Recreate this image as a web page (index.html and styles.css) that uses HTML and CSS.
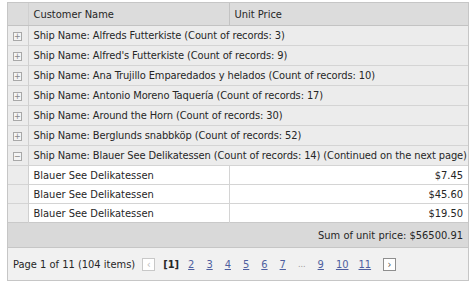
FILE: index.html
```html
<!DOCTYPE html>
<html lang="en">

<head>
    <meta charset="UTF-8">
    <title>Grid</title>
    <link rel="stylesheet" href="styles.css">
</head>

<body>
    <div class="grid">
        <table class="grid-table">
            <colgroup>
                <col class="indent-col">
                <col class="name-col">
                <col>
            </colgroup>
            <tr class="header-row">
                <td class="indent"></td>
                <td class="col-name">Customer Name</td>
                <td class="col-price">Unit Price</td>
            </tr>
            <tr class="group-row">
                <td class="indent"><span class="expand">+</span></td>
                <td colspan="2">Ship Name: Alfreds Futterkiste (Count of records: 3)</td>
            </tr>
            <tr class="group-row">
                <td class="indent"><span class="expand">+</span></td>
                <td colspan="2">Ship Name: Alfred's Futterkiste (Count of records: 9)</td>
            </tr>
            <tr class="group-row">
                <td class="indent"><span class="expand">+</span></td>
                <td colspan="2">Ship Name: Ana Trujillo Emparedados y helados (Count of records: 10)</td>
            </tr>
            <tr class="group-row">
                <td class="indent"><span class="expand">+</span></td>
                <td colspan="2">Ship Name: Antonio Moreno Taquería (Count of records: 17)</td>
            </tr>
            <tr class="group-row">
                <td class="indent"><span class="expand">+</span></td>
                <td colspan="2">Ship Name: Around the Horn (Count of records: 30)</td>
            </tr>
            <tr class="group-row">
                <td class="indent"><span class="expand">+</span></td>
                <td colspan="2">Ship Name: Berglunds snabbköp (Count of records: 52)</td>
            </tr>
            <tr class="group-row">
                <td class="indent"><span class="expand">&minus;</span></td>
                <td colspan="2">Ship Name: Blauer See Delikatessen (Count of records: 14) (Continued on the next page)</td>
            </tr>
            <tr class="data-row">
                <td class="indent"></td>
                <td>Blauer See Delikatessen</td>
                <td class="price">$7.45</td>
            </tr>
            <tr class="data-row">
                <td class="indent"></td>
                <td>Blauer See Delikatessen</td>
                <td class="price">$45.60</td>
            </tr>
            <tr class="data-row">
                <td class="indent"></td>
                <td>Blauer See Delikatessen</td>
                <td class="price">$19.50</td>
            </tr>
            <tr class="footer-row">
                <td colspan="3">Sum of unit price: $56500.91</td>
            </tr>
        </table>
        <div class="pager">
            <span class="summary">Page 1 of 11 (104 items)</span>
            <span class="nav-btn prev disabled">&lsaquo;</span>
            <b class="current">[1]</b>
            <a href="#">2</a>
            <a href="#">3</a>
            <a href="#">4</a>
            <a href="#">5</a>
            <a href="#">6</a>
            <a href="#">7</a>
            <span class="dots">...</span>
            <a href="#">9</a>
            <a href="#">10</a>
            <a href="#" class="last">11</a>
            <span class="nav-btn">&rsaquo;</span>
        </div>
    </div>
</body>

</html>
```

FILE: styles.css
```css
body {
    margin: 2px 0 0 7px;
    font-family: "DejaVu Sans Condensed", "DejaVu Sans", sans-serif;
    font-size: 11px;
    color: #262626;
    background-color: white;
}

.grid {
    width: 460px;
    border: 1px solid #c6c6c6;
}

.grid-table {
    width: 100%;
    border-collapse: collapse;
    table-layout: fixed;
}

.indent-col {
    width: 20px;
}

.name-col {
    width: 201px;
}

.grid-table td {
    padding: 0 5px;
    height: 19px;
    border-top: 1px solid #d4d4d4;
    white-space: nowrap;
    overflow: hidden;
}

.header-row td {
    background-color: #dcdcdc;
    height: 22px;
    border-top: none;
    border-bottom: 1px solid #c3c3c3;
}

.header-row .col-name {
    border-right: 1px solid #c3c3c3;
}

.group-row td:nth-child(2) {
    letter-spacing: -0.1px;
}

.indent {
    background-color: #e4e4e4;
    border-right: 1px solid #d0d0d0;
}

.header-row .indent {
    background-color: #dcdcdc;
}

.group-row td {
    background-color: #ececec;
}

.data-row td {
    background-color: white;
    height: 18px;
}

.data-row td:nth-child(2) {
    border-right: 1px solid #d4d4d4;
}

.data-row .indent {
    background-color: #ececec;
}

.price {
    text-align: right;
}

.expand {
    display: inline-flex;
    width: 7px;
    height: 7px;
    border: 1px solid #a8a8a8;
    font-size: 9px;
    line-height: 7px;
    justify-content: center;
    color: #888;
    background-color: #f4f4f4;
}

.footer-row td {
    background-color: #d9d9d9;
    text-align: right;
    height: 24px;
    border-top: 1px solid #c9c9c9;
}

.pager {
    display: flex;
    align-items: center;
    gap: 12px;
    height: 32px;
    padding-left: 5px;
    background-color: #f1f1f1;
    border-top: 1px solid #c6c6c6;
}

.pager a {
    color: #4e5fa0;
}

.pager a.last {
    margin-left: -2px;
}

.current {
    font-weight: bold;
    margin-right: -3px;
}

.dots {
    color: #999;
    font-size: 9px;
}

.nav-btn {
    display: inline-flex;
    justify-content: center;
    align-items: center;
    width: 11px;
    height: 11px;
    border: 1px solid #8e8e8e;
    background-color: white;
    color: #555;
    font-size: 11px;
}

.nav-btn.prev {
    margin: 0 -4px 0 -5px;
}

.nav-btn.disabled {
    border-color: #c8c8c8;
    color: #bbb;
}
```
